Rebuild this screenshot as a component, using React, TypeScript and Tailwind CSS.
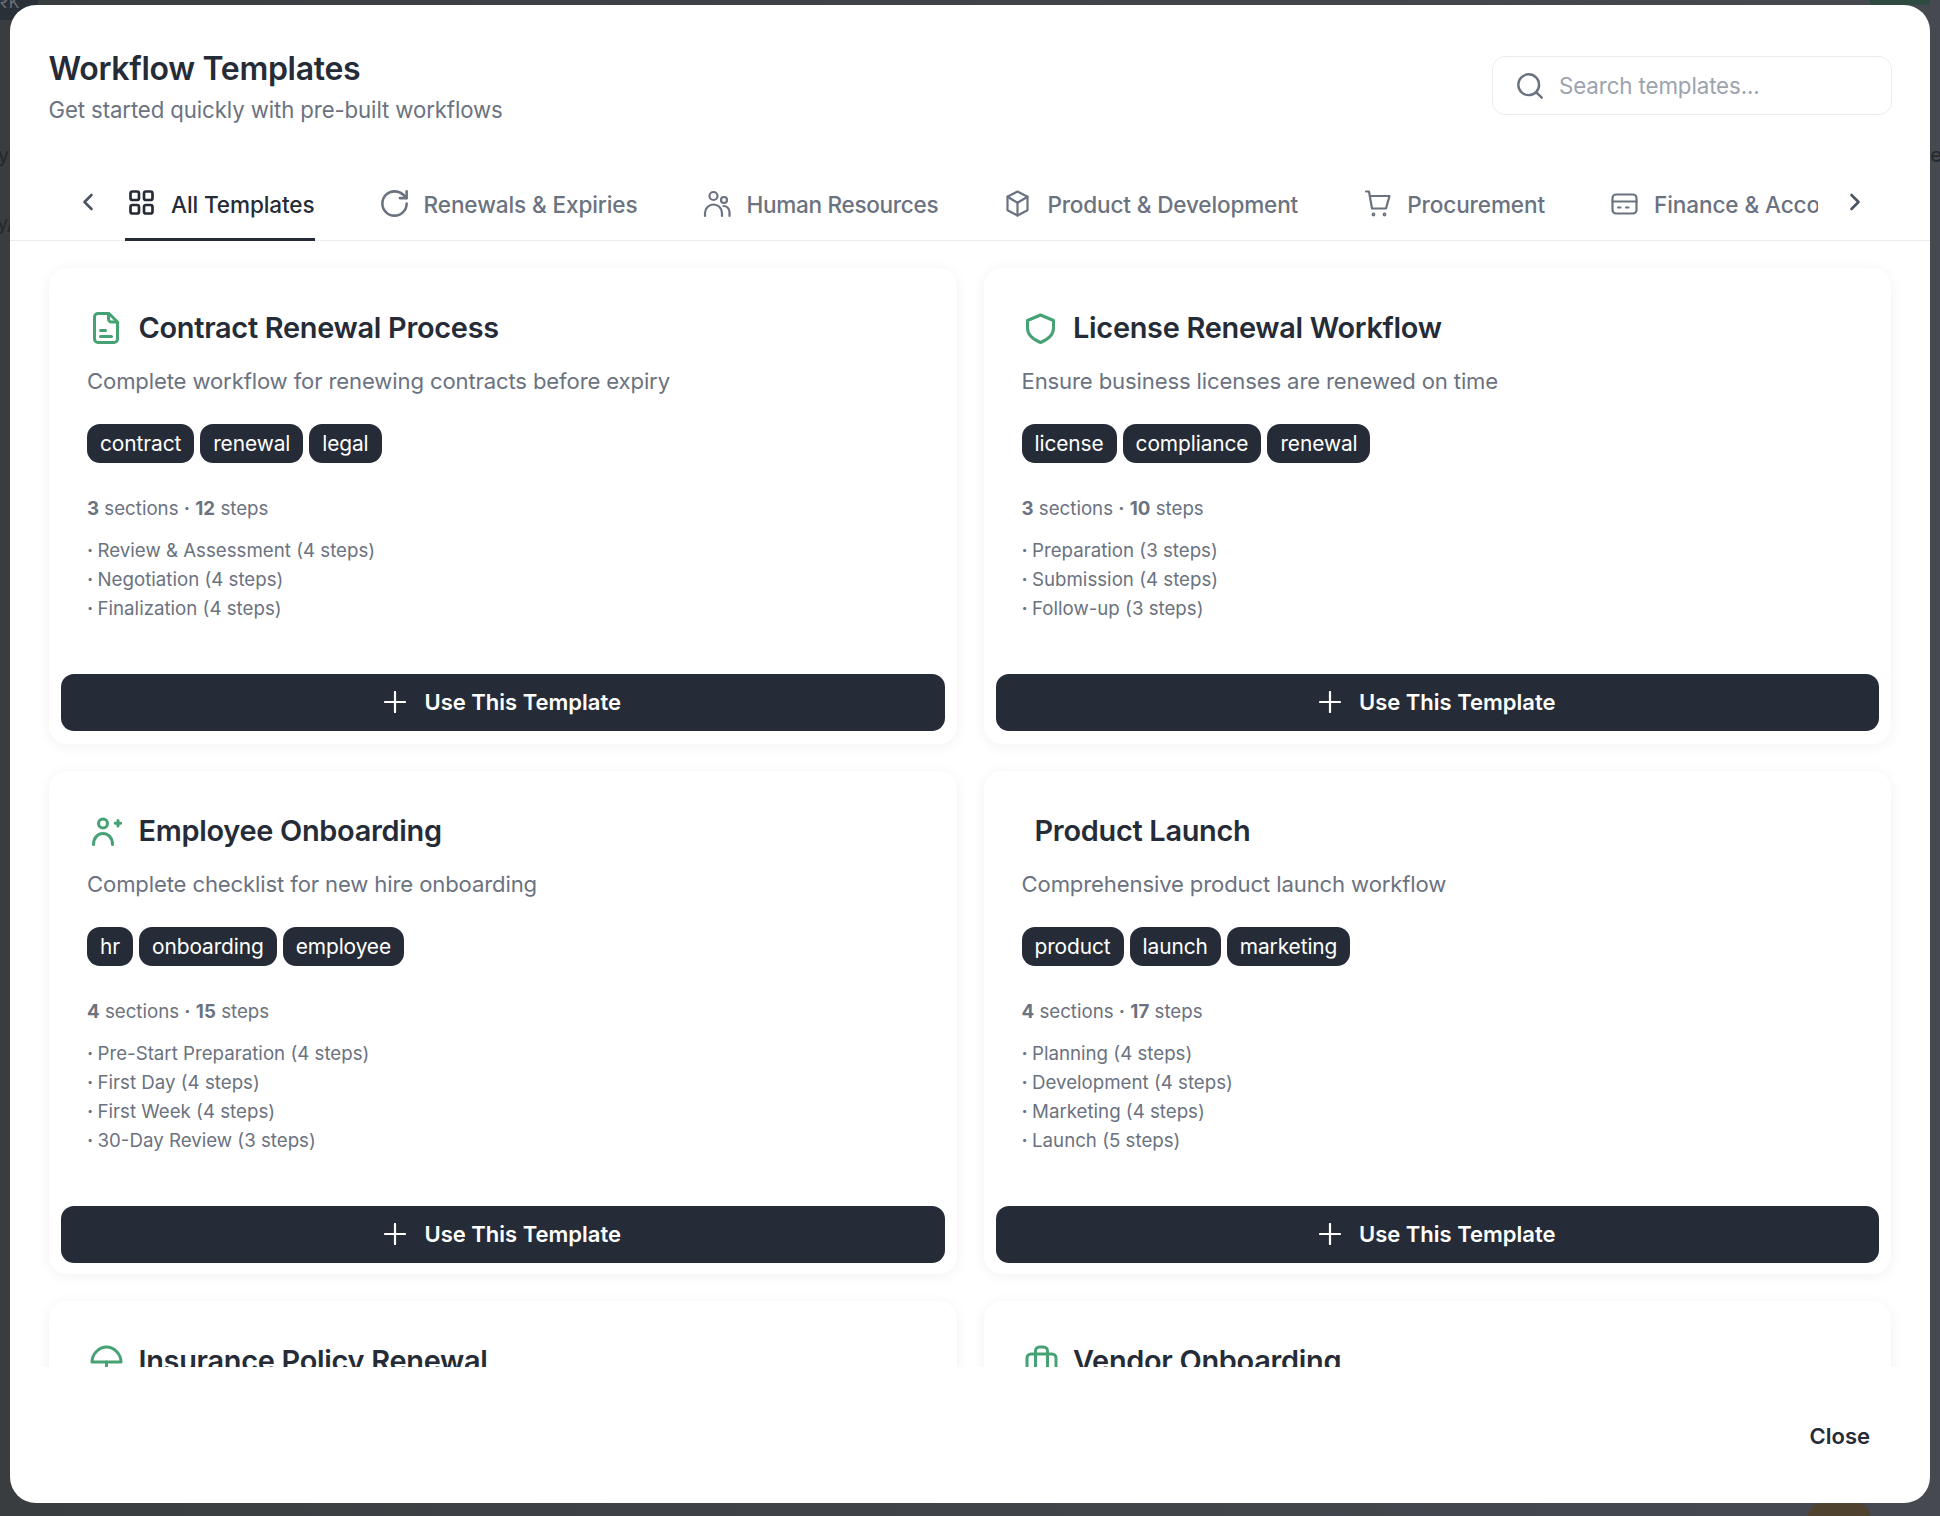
import React from "react";

const Ic = ({ w, h = w, vb, sw, children, cls = "" }: { w: number; h?: number; vb: string; sw: number; children: React.ReactNode; cls?: string }) => (
  <svg width={w} height={h} viewBox={vb} fill="none" stroke="currentColor" strokeWidth={sw} strokeLinecap="round" strokeLinejoin="round" className={"shrink-0 " + cls}>
    {children}
  </svg>
);

const GridIcon = () => (
  <Ic w={25} vb="0 0 25 25" sw={2.7}>
    <rect x="1.5" y="1.5" width="8.5" height="8.5" rx="2" />
    <rect x="15" y="1.5" width="8.5" height="8.5" rx="2" />
    <rect x="1.5" y="15" width="8.5" height="8.5" rx="2" />
    <rect x="15" y="15" width="8.5" height="8.5" rx="2" />
  </Ic>
);
const RotateIcon = () => (
  <Ic w={27} vb="2 2 20 20" sw={1.9}>
    <path d="M21 12a9 9 0 1 1-9-9c2.52 0 4.93 1 6.74 2.74L21 8" />
    <path d="M21 3v5h-5" />
  </Ic>
);
const UsersIcon = () => (
  <Ic w={28} vb="0 0 28 28" sw={2.2}>
    <circle cx="10.5" cy="6" r="4" />
    <circle cx="21" cy="10" r="3" />
    <path d="M2 26v-3a8.5 8.5 0 0 1 17 0v3" />
    <path d="M20.5 16a6 6 0 0 1 6 6v4" />
  </Ic>
);
const BoxIcon = () => (
  <Ic w={25} h={27} vb="0 0 25 27" sw={2.2}>
    <path d="M12.5 1.5l10 5.2v13.6l-10 5.2-10-5.2V6.700z" />
    <path d="M2.500 6.700l10 6 10-6" />
    <path d="M12.500 12.700v13" />
  </Ic>
);
const CartIcon = () => (
  <Ic w={28} h={27} vb="0 0 28 27" sw={2.2}>
    <path d="M2 1.500h3l3 17h14l3.500-12.500H6" />
    <circle cx="9.500" cy="24.500" r="0.8" />
    <circle cx="20.500" cy="24.500" r="0.8" />
  </Ic>
);
const CardIcon = () => (
  <Ic w={27} h={22} vb="0 0 27 22" sw={2.2} cls="mt-[3px]">
    <rect x="1.500" y="1.500" width="24" height="19" rx="3.500" />
    <path d="M1.500 8.500h24" />
    <path d="M7 14.500h2.500M15 14.500h2.500" />
  </Ic>
);
const DocIcon = () => (
  <Ic w={26} h={32} vb="0 0 26 32" sw={3}>
    <path d="M5 1.500h11l8.500 8.500v17a3.500 3.500 0 0 1-3.500 3.500H5A3.500 3.500 0 0 1 1.500 27V5A3.500 3.500 0 0 1 5 1.500z" />
    <path d="M15.500 2v5a3 3 0 0 0 3 3h5.500" />
    <path d="M7.500 18.500h5M7.500 24.500h11" />
  </Ic>
);
const ShieldIcon = () => (
  <Ic w={31} vb="0 0 31 31" sw={3}>
    <path d="M15.500 2L28.500 7.500V15C28.500 21.500 23 26.500 15.500 29.500 8 26.500 2.500 21.500 2.500 15V7.500z" />
  </Ic>
);
const PersonPlusIcon = () => (
  <Ic w={30} h={29} vb="0 0 30 29" sw={3}>
    <circle cx="11" cy="6.500" r="4.500" />
    <path d="M1.500 27.500C1.500 20.500 6 16.500 11 16.500S20.500 20.500 20.500 27.500" />
    <path d="M26 3.500v5.500M23.200 6.200h5.500" />
  </Ic>
);
const UmbrellaIcon = () => (
  <Ic w={33} vb="0 0 33 33" sw={3}>
    <path d="M2 17C2 9 9 2 16.500 2S31 9 31 17z" />
    <path d="M16.500 17v14" />
  </Ic>
);
const CaseIcon = () => (
  <Ic w={33} vb="0 0 33 33" sw={3}>
    <path d="M10.500 32V6a4 4 0 0 1 4-4h4a4 4 0 0 1 4 4v26" />
    <path d="M2 32V13a4 4 0 0 1 4-4h21a4 4 0 0 1 4 4v19" />
  </Ic>
);

const tabs = [
  { label: "All Templates", icon: <GridIcon />, active: true, track: "tracking-[-0.1px]" },
  { label: "Renewals & Expiries", icon: <RotateIcon />, track: "tracking-[-0.1px]" },
  { label: "Human Resources", icon: <UsersIcon />, track: "tracking-[-0.3px]" },
  { label: "Product & Development", icon: <BoxIcon />, track: "tracking-[-0.15px]" },
  { label: "Procurement", icon: <CartIcon />, track: "tracking-[-0.1px]" },
  { label: "Finance & Accounting", icon: <CardIcon />, track: "tracking-[-0.1px]" },
];

const cards = [
  {
    title: "Contract Renewal Process",
    icon: <DocIcon />,
    box: "w-[51.500px] pl-[6px]",
    pb: "pb-[13px]",
    desc: "Complete workflow for renewing contracts before expiry",
    tags: ["contract", "renewal", "legal"],
    s: 3,
    n: 12,
    items: ["Review & Assessment (4 steps)", "Negotiation (4 steps)", "Finalization (4 steps)"],
  },
  {
    title: "License Renewal Workflow",
    icon: <ShieldIcon />,
    box: "w-[51.500px] pl-[3px]",
    pb: "pb-[13px]",
    desc: "Ensure business licenses are renewed on time",
    tags: ["license", "compliance", "renewal"],
    s: 3,
    n: 10,
    items: ["Preparation (3 steps)", "Submission (4 steps)", "Follow-up (3 steps)"],
  },
  {
    title: "Employee Onboarding",
    icon: <PersonPlusIcon />,
    box: "w-[51.500px] pl-[5px]",
    pb: "pb-[11px]",
    desc: "Complete checklist for new hire onboarding",
    tags: ["hr", "onboarding", "employee"],
    s: 4,
    n: 15,
    items: ["Pre-Start Preparation (4 steps)", "First Day (4 steps)", "First Week (4 steps)", "30-Day Review (3 steps)"],
  },
  {
    title: "Product Launch",
    icon: null,
    box: "w-[13px]",
    pb: "pb-[11px]",
    desc: "Comprehensive product launch workflow",
    tags: ["product", "launch", "marketing"],
    s: 4,
    n: 17,
    items: ["Planning (4 steps)", "Development (4 steps)", "Marketing (4 steps)", "Launch (5 steps)"],
  },
];

function Title({ icon, box, title }: { icon: React.ReactNode; box: string; title: string }) {
  return (
    <div className="flex h-[36px] items-center">
      <div className={"flex shrink-0 items-center text-[#46a274] " + box}>{icon}</div>
      <h3 className="text-[28.900px] font-semibold leading-[36px] tracking-[-0.28px] whitespace-nowrap text-[#252c37]">{title}</h3>
    </div>
  );
}

function Card({ c }: { c: (typeof cards)[number] }) {
  return (
    <div className="flex flex-col rounded-[18px] bg-white shadow-[0_2px_14px_rgba(17,24,39,0.06)]">
      <div className="px-[38px] pt-[42px]">
        <Title icon={c.icon} box={c.box} title={c.title} />
        <p className="mt-[20px] text-[22.100px] leading-[30px] tracking-[-0.13px] text-[#6b7280]">{c.desc}</p>
        <div className="mt-[28px] flex gap-[6px]">
          {c.tags.map((t) => (
            <span key={t} className="flex h-[39px] items-center rounded-[13px] bg-[#252c37] px-[13px] text-[20.900px] tracking-[-0.1px] text-white">
              {t}
            </span>
          ))}
        </div>
        <div className="mt-[32px] text-[18.700px] leading-[28px] text-[#6b7280]">
          <span className="font-bold">{c.s}</span> sections <span className="font-bold">·</span> <span className="font-bold">{c.n}</span> steps
        </div>
        <ul className="mt-[13px] text-[18.700px] leading-[29px] text-[#6b7280]">
          {c.items.map((i) => (
            <li key={i}>
              <span className="mr-[-1px] font-bold">·</span> {i}
            </li>
          ))}
        </ul>
      </div>
      <div className={"mt-auto px-[12px] " + c.pb}>
        <button className="flex h-[57.500px] w-full items-center justify-center gap-[18px] rounded-[13px] bg-[#252c37] text-[22px] font-semibold text-white">
          <Ic w={22} vb="0 0 22 22" sw={2.2}>
            <path d="M11 1v20M1 11h20" />
          </Ic>
          Use This Template
        </button>
      </div>
    </div>
  );
}

function StubCard({ icon, title }: { icon: React.ReactNode; title: string }) {
  return (
    <div className="h-[400px] rounded-[18px] bg-white px-[38px] pt-[42px] shadow-[0_2px_14px_rgba(17,24,39,0.06)]">
      <Title icon={icon} box="w-[51.500px] pl-[3px]" title={title} />
    </div>
  );
}

export default function App() {
  return (
    <div className="relative h-[1516px] w-[1940px] overflow-hidden bg-gradient-to-r from-[#3a3d40] to-[#464950] pl-[10px] pt-[5px] font-['Inter',sans-serif]">
      <div className="absolute left-0 top-0 h-[20px] w-[38px] overflow-hidden bg-[#2a3038]">
        <span className="block mt-[-8px] text-[16px] leading-[20px] text-[#6b7078]">₹K</span>
      </div>
      <div className="absolute right-[10px] top-0 h-[5px] w-[60px] bg-[#2f4a40]" />
      <div className="absolute bottom-0 right-[70px] h-[13px] w-[62px] rounded-t-[24px] bg-[#4f4330]" />
      <span className="absolute left-[-2px] top-[140px] text-[20px] text-[#24282c]">y</span>
      <span className="absolute left-[-3px] top-[208px] text-[20px] text-[#24282c]">y/p</span>
      <span className="absolute right-[-2px] top-[140px] text-[20px] text-[#24282c]">e</span>
      <div className="relative flex h-[1498px] w-[1920px] flex-col overflow-hidden rounded-[26px] bg-white">
        <header className="flex h-[149px] shrink-0 items-start justify-between pl-[38.500px] pr-[39px]">
          <div className="pt-[46px]">
            <h2 className="text-[32px] font-semibold leading-[36px] tracking-[-0.3px] text-[#252c37]">Workflow Templates</h2>
            <p className="mt-[8px] text-[22.200px] leading-[30px] tracking-[-0.1px] text-[#6b7280]">Get started quickly with pre-built workflows</p>
          </div>
          <div className="mr-[-1px] mt-[51px] flex h-[59px] w-[400px] items-center gap-[16px] rounded-[13px] border border-[#e9ebee] px-[24px]">
            <Ic w={26} vb="2 2 20 20" sw={1.85} cls="text-[#6b7280]">
              <path d="m21 21-4.340-4.340" />
              <circle cx="11" cy="11" r="8" />
            </Ic>
            <input
              placeholder="Search templates..."
              className="min-w-0 flex-1 bg-transparent text-[22.300px] tracking-[-0.1px] outline-none placeholder:text-[#9ca3af]"
            />
          </div>
        </header>

        <nav className="flex h-[87px] shrink-0 items-start border-b border-[#e9ebee] pl-[72px] pr-[60px]">
          <Ic w={12} h={18} vb="0 0 12 18" sw={2.600} cls="mt-[39px] text-[#4b5563]">
            <path d="M9.500 2L2.500 9l7 7" />
          </Ic>
          <div className="ml-[31px] flex h-[87px] w-[1693px] gap-[63px] overflow-hidden">
            {tabs.map((t) => (
              <div
                key={t.label}
                className={
                  "flex h-[87px] shrink-0 items-start gap-[17px] pl-[4px] pt-[36px] text-[22.550px] leading-[30px] font-medium " +
                  t.track +
                  " " +
                  (t.active ? "border-b-[3px] border-[#252c37] text-[#252c37]" : "text-[#6b7280]")
                }
              >
                <div className="flex h-[28px] w-[25px] shrink-0 items-start justify-center">{t.icon}</div>
                <span className="whitespace-nowrap">{t.label}</span>
              </div>
            ))}
          </div>
          <Ic w={12} h={18} vb="0 0 12 18" sw={2.600} cls="ml-[31px] mt-[39px] text-[#4b5563]">
            <path d="M2.500 2l7 7-7 7" />
          </Ic>
        </nav>

        <main className="h-[1126px] shrink-0 overflow-hidden px-[39px] pt-[27px]">
          <div className="grid grid-cols-2 grid-rows-[476px_503px_400px] gap-x-[27px] gap-y-[27px]">
            {cards.map((c) => (
              <Card key={c.title} c={c} />
            ))}
            <StubCard icon={<UmbrellaIcon />} title="Insurance Policy Renewal" />
            <StubCard icon={<CaseIcon />} title="Vendor Onboarding" />
          </div>
        </main>

        <footer className="flex flex-1 items-start justify-end pr-[60px] pt-[51px]">
          <button className="text-[22px] font-semibold leading-[36px] text-[#252c37]">Close</button>
        </footer>
      </div>
    </div>
  );
}
